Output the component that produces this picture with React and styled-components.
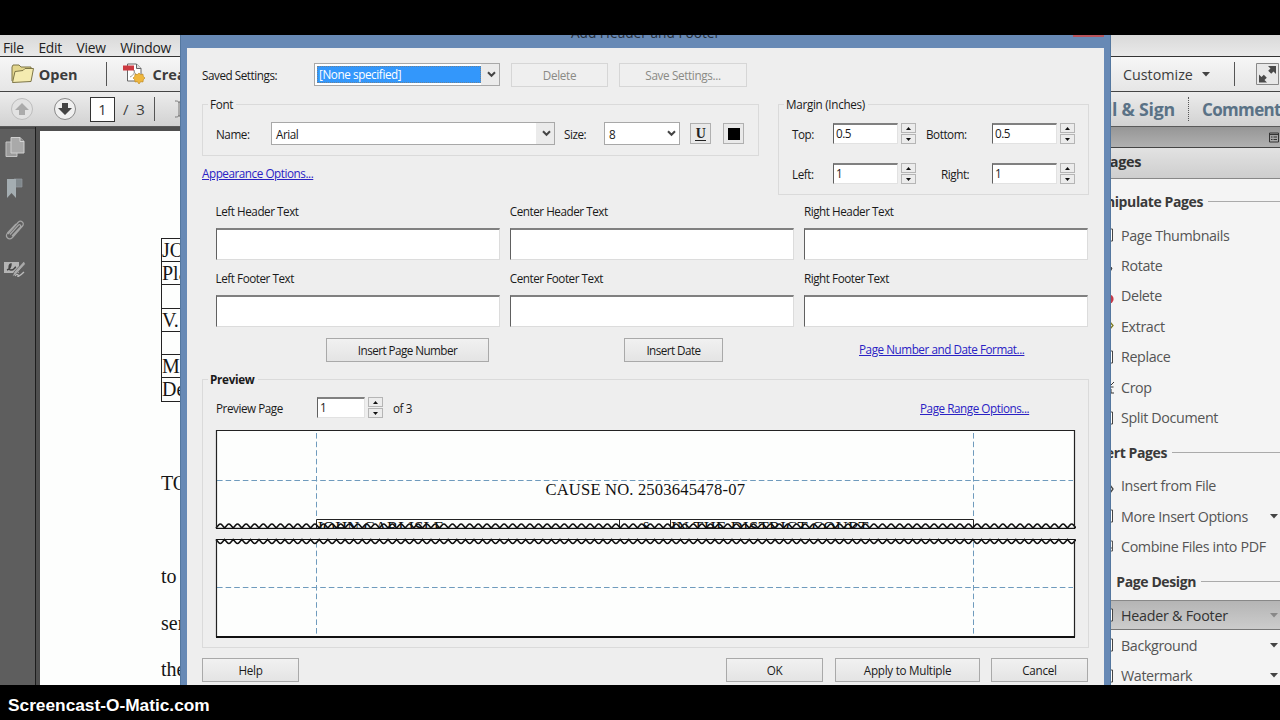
import React from "react";
import styled, { createGlobalStyle } from "styled-components";

const UI = `"Open Sans", "Noto Sans", sans-serif`;
const SERIF = `"Liberation Serif", serif`;

const Global = createGlobalStyle`
  * { box-sizing: border-box; }
  body { margin: 0; background: #000; overflow: hidden; }
`;

/* ---------- frame ---------- */
const Screen = styled.div`
  width: 1280px;
  height: 720px;
  background: #000;
  padding: 35px 0;
  display: grid;
  grid-template-rows: 650px 35px;
  font-family: ${UI};
`;
const Desktop = styled.div`
  position: relative;
  overflow: hidden;
  display: grid;
  grid-template-rows: 22px 35px 35px 1fr;
  background: #f2f2f2;
`;
const Watermark = styled.div`
  padding-left: 8px;
  font: bold 17.3px/41px "Liberation Sans", sans-serif;
  color: #fff;
`;

/* ---------- viewer bars ---------- */
const MenuBar = styled.div`
  display: flex;
  align-items: center;
  gap: 14.6px;
  padding: 3px 0 0 3px;
  border-bottom: 1px solid #333;
  background: linear-gradient(#d9d9d9, #e9e9e9);
  font-size: 13.8px;
  letter-spacing: -0.25px;
  color: #222;
`;
const ToolBar = styled.div`
  display: flex;
  justify-content: space-between;
  border-bottom: 1px solid #444;
  background: linear-gradient(#f6f6f6, #e6e6e6);
`;
const NavBar = styled(ToolBar)`
  background: linear-gradient(#ececec, #d2d2d2);
  border-bottom: 1px solid #5a5a5a;
`;
const BarSide = styled.div`
  display: flex;
  align-items: center;
  flex: none;
  padding-left: ${(p) => p.$pad || 0}px;
`;
const BarText = styled.span`
  flex: none;
  width: ${(p) => p.$w}px;
  white-space: nowrap;
  text-align: ${(p) => (p.$right ? "right" : "left")};
  font-size: ${(p) => p.$size || 15}px;
  font-weight: ${(p) => (p.$bold ? 700 : 400)};
  letter-spacing: ${(p) => p.$ls || 0}px;
  color: ${(p) => p.$color || "#3c3c3c"};
`;
const BarLine = styled.i`
  width: 1px;
  height: 24px;
  margin: 0 ${(p) => p.$r || 0}px 0 ${(p) => p.$l || 0}px;
  border-left: 1px ${(p) => (p.$dotted ? "dotted" : "solid")} #555;
`;
const PageBox = styled.div`
  width: 25px;
  height: 25px;
  margin: 0 8px 0 13px;
  border: 1px solid #333;
  background: #fff;
  font-size: 14.5px;
  line-height: 24px;
  text-align: center;
  color: #333;
`;
const Art = styled.svg`
  display: block;
  flex: none;
  margin: ${(p) => p.$m || 0};
`;

/* ---------- document ---------- */
const Work = styled.div`
  display: grid;
  grid-template-columns: 35px 1025px 220px;
`;
const Rail = styled.div`
  background: #5e5e5e;
  border-top: 2px solid #4a4a4a;
  display: flex;
  flex-direction: column;
  gap: 19px;
  padding: 7px 0 0 4px;
`;
const Canvas = styled.div`
  background: #4f4f4f;
  border-left: 1px solid #1d1d1d;
  padding: 4px 0 0 4px;
`;
const Paper = styled.div`
  height: 100%;
  background: #fdfefd;
  padding: 107px 0 0 121px;
  font: 20px/23.3px ${SERIF};
  color: #161616;
`;
const Caption = styled.div`
  width: 600px;
  border: 1px solid #222;
`;
const CaptionRow = styled.div`
  height: 23.2px;
  border-bottom: ${(p) => (p.$last ? 0 : 1)}px solid #222;
`;
const DocLine = styled.p`
  margin: ${(p) => p.$top}px 0 0;
  height: 23px;
`;

/* ---------- tools panel ---------- */
const Panel = styled.div`
  background: #f4f4f4;
  overflow: hidden;
`;
const PanelStrip = styled.div`
  height: 21px;
  display: flex;
  align-items: center;
  justify-content: flex-end;
  background: linear-gradient(#969696, #b0b0b0);
  border-bottom: 1px solid #444;
`;
const PanelTitle = styled.div`
  height: 31px;
  width: 100%;
  padding-right: 139px;
  text-align: right;
  background: linear-gradient(#e2e2e2, #cecece);
  border-bottom: 1px solid #888;
  font-weight: 700;
  font-size: 14.5px;
  line-height: 28px;
  letter-spacing: -0.4px;
  color: #333;
  margin-bottom: 3px;
`;
const SectionHead = styled.div`
  height: 38px;
  padding-top: 1px;
  display: flex;
  align-items: center;
  gap: 5px;
  white-space: nowrap;
  font-weight: 700;
  font-size: 14px;
  letter-spacing: -0.4px;
  color: #3a3a3a;
  span {
    width: ${(p) => p.$w}px;
    text-align: right;
    flex: none;
  }
  &::after {
    content: "";
    flex: 1;
    height: 1px;
    background: #aaa;
  }
`;
const Item = styled.div`
  height: 30.4px;
  padding: 0 2px 0 40px;
  display: flex;
  align-items: center;
  font-size: 14.3px;
  letter-spacing: -0.38px;
  color: ${(p) => (p.$on ? "#333" : "#555")};
  ${(p) =>
    p.$on &&
    "background: linear-gradient(#b4b4b4, #cdcdcd); box-shadow: inset 0 1px #888, inset 0 -1px #777; letter-spacing: -0.25px;"}
  span {
    flex: 1;
    padding-left: 7px;
    white-space: nowrap;
  }
`;

/* ---------- dialog ---------- */
const Dialog = styled.div`
  position: absolute;
  left: 180px;
  top: 0;
  width: 931px;
  height: 650px;
  display: grid;
  grid-template-rows: 13px 1fr;
  background: #6789b5;
  border: solid #54779f;
  border-width: 0 1px;
  padding: 0 6px;
`;
const TitleBar = styled.div`
  position: relative;
  overflow: hidden;
  text-align: center;
  font-size: 13.7px;
  line-height: 20px;
  color: #26303d;
  span {
    display: block;
    margin-top: -12px;
  }
`;
const CloseEdge = styled.i`
  position: absolute;
  right: 0;
  top: 0;
  width: 31px;
  height: 2px;
  background: #b8545c;
`;
const Body = styled.div`
  background: #eeeeee;
  padding: 15px 15px 0;
  font-size: 11.7px;
  letter-spacing: -0.45px;
  line-height: 16px;
  color: #1a1a1a;
  white-space: nowrap;
`;
const Row = styled.div`
  display: flex;
  align-items: ${(p) => p.$align || "center"};
  margin-top: ${(p) => p.$top || 0}px;
  padding-left: ${(p) => p.$pad || 0}px;
`;
const Label = styled.span`
  flex: none;
  width: ${(p) => p.$w}px;
  padding-top: ${(p) => p.$drop || 0}px;
`;
const Button = styled.button`
  flex: none;
  width: ${(p) => p.$w}px;
  height: 24px;
  margin-left: ${(p) => p.$l || 0}px;
  padding: 0;
  border: 1px solid ${(p) => (p.disabled ? "#d6d6d6" : "#a9a9a9")};
  background: ${(p) => (p.disabled ? "#efefef" : "linear-gradient(#f1f1f1, #e4e4e4)")};
  font: inherit;
  letter-spacing: ${(p) => p.$ls || -0.28}px;
  color: ${(p) => (p.disabled ? "#8a8a85" : "#1a1a1a")};
`;
const Combo = styled.div`
  flex: none;
  width: ${(p) => p.$w}px;
  height: 23px;
  display: flex;
  align-items: center;
  justify-content: space-between;
  padding: ${(p) => (p.$selected ? "0 2px" : "0 0 0 4px")};
  border: 1px solid #a8a8a8;
  background: ${(p) => (p.$flat ? "#fff" : "linear-gradient(90deg, #fff calc(100% - 18px), #ebebeb calc(100% - 18px))")};
`;
const Selected = styled.span`
  width: 164px;
  height: 17px;
  margin-bottom: 1px;
  padding-left: 2px;
  line-height: 16px;
  background: #3397fb;
  outline: 1px dotted #6b8296;
  outline-offset: -1px;
  color: #fff;
  letter-spacing: -0.4px;
`;
const Group = styled.fieldset`
  width: ${(p) => p.$w}px;
  height: ${(p) => p.$h}px;
  min-width: 0;
  margin: ${(p) => p.$top || 0}px 0 0 ${(p) => p.$l || 0}px;
  padding: 0 0 0 ${(p) => p.$pad}px;
  border: 1px solid #dadada;
`;
const Legend = styled.legend`
  margin-left: ${(p) => -p.$back}px;
  padding: 0 3px 0 2px;
  height: 16px;
  font-weight: ${(p) => (p.$bold ? 700 : 400)};
  letter-spacing: ${(p) => p.$ls || -0.3}px;
`;
const ToolButton = styled.div`
  width: 21px;
  height: 21px;
  margin-left: ${(p) => p.$l}px;
  display: grid;
  place-items: center;
  border: 1px solid #b0b0b0;
  background: #e9e9e9;
  font: bold 14px/14px ${SERIF};
  color: #222;
`;
const UnderlineMark = styled.span`
  border-bottom: 1px solid #222;
  line-height: 13px;
  padding: 0 1px;
`;
const Swatch = styled.i`
  width: 12px;
  height: 12px;
  background: #000;
`;
const Link = styled.a`
  color: #2a22c4;
  text-decoration: underline;
  margin-left: ${(p) => p.$l || 0}px;
  margin-bottom: ${(p) => p.$lift || 0}px;
  letter-spacing: ${(p) => p.$ls || -0.45}px;
`;
const SpinInput = styled.div`
  flex: none;
  width: ${(p) => p.$w}px;
  height: 21px;
  padding-left: 2px;
  border: solid #e2e2e2;
  border-width: 2px 1px 1px 1px;
  border-top-color: #808080;
  border-left-color: #606060;
  background: #fff;
  line-height: 16px;
`;
const SpinColumn = styled.div`
  width: 15px;
  margin: 0 ${(p) => p.$r || 0}px 0 3px;
  display: grid;
  grid-template-rows: 10px 10px;
  gap: 1px;
`;
const SpinButton = styled.div`
  border: 1px solid #b5b5b5;
  background: #ececec;
  display: grid;
  place-items: center;
`;
const FieldGrid = styled.div`
  display: grid;
  grid-template-columns: repeat(3, 284px);
  column-gap: 10.2px;
  margin: ${(p) => p.$top}px 0 0 13.6px;
  letter-spacing: -0.46px;
`;
const TextField = styled.div`
  height: 32px;
  margin-top: 9px;
  border: solid #dcdcdc;
  border-width: 2px 1px 1px 1px;
  border-top-color: #808080;
  border-left-color: #606060;
  background: #fff;
`;
const PreviewArt = styled.svg`
  display: block;
  margin: ${(p) => p.$top}px 0 0 -1px;
`;

/* ---------- small drawings ---------- */
const Chevron = ({ m }) => (
  <Art width="9" height="7" $m={m}>
    <path d="M1 1.200 4.500 4.800 8 1.200" fill="none" stroke="#444" strokeWidth="2" />
  </Art>
);
const Caret = ({ m, color = "#444" }) => (
  <Art width="8" height="5" $m={m}>
    <path d="M0 0h8L4 4.600z" fill={color} />
  </Art>
);
const Spin = ({ w, value, r }) => (
  <>
    <SpinInput $w={w}>{value}</SpinInput>
    <SpinColumn $r={r}>
      <SpinButton>
        <Art width="5" height="3"><path d="M0 3 2.500 0 5 3z" fill="#111" /></Art>
      </SpinButton>
      <SpinButton>
        <Art width="5" height="3"><path d="M0 0 2.500 3 5 0z" fill="#111" /></Art>
      </SpinButton>
    </SpinColumn>
  </>
);

const FolderIcon = () => (
  <Art width="24" height="20" viewBox="0 0 24 20">
    <path d="M1 17V3l1-2h6l2 2h10v3" fill="#e3d68d" stroke="#7d7546" />
    <path d="M1.500 18.500 4 7.500l8-1 2-2h8.500l-2.500 13z" fill="#f4ebb0" stroke="#7d7546" />
  </Art>
);
const CreateIcon = () => (
  <Art width="22" height="22" viewBox="0 0 22 22">
    <path d="M4.500 1h9l4.500 4.500V18H4.500z" fill="#fff" stroke="#666" />
    <path d="M13.500 1v4.500H18" fill="#ddd" stroke="#666" />
    <path d="M7 14c4-2 5-5 4-7 0 3 2 5 5 6" fill="none" stroke="#999" />
    <path d="M0 2.500h11v5H0z" fill="#cc3940" />
    <path d="m16 10 1.700 1.500 2.300-.4.300 2.300 1.700 1.600-1.700 1.700-.3 2.300-2.300-.3L16 21l-1.700-2.300-2.300.3-.3-2.300L10 15l1.700-1.600.3-2.300 2.300.4z" fill="#efb73e" stroke="#b98420" strokeWidth=".6" />
  </Art>
);
const ArrowDisc = ({ down, m }) => (
  <Art width="24" height="24" viewBox="0 0 24 24" $m={m}>
    <circle cx="12" cy="12" r="10.500" fill={down ? "#f0f0f0" : "#e2e2e2"} stroke={down ? "#888" : "#bdbdbd"} />
    <path
      d="M9 6h6v5h4l-7 7-7-7h4z"
      fill={down ? "#444" : "#ababab"}
      transform={down ? undefined : "rotate(180 12 12)"}
    />
  </Art>
);
const PagesIcon = () => (
  <Art width="21" height="23" viewBox="0 0 21 23">
    <path d="M2 6h11v14.500H2z" fill="#9b9b9b" stroke="#c4c4c4" />
    <path d="M7 1.500h9l4 4V17H7z" fill="#a9a9a9" stroke="#cfcfcf" />
    <path d="M16 1.500v4h4" fill="#888" stroke="#d5d5d5" />
  </Art>
);
const BookmarkIcon = () => (
  <Art width="21" height="22" viewBox="0 0 21 22">
    <path d="M10 1h8v8h-8z" fill="#80888c" stroke="#929a9e" strokeWidth=".7" />
    <path d="M3 1h9v19l-4.500-5L3 20z" fill="#a4adb1" />
  </Art>
);
const ClipIcon = () => (
  <Art width="21" height="22" viewBox="0 0 21 22">
    <path d="M4 15 14 3.500c3-3 7 .5 4.500 3.500L8.500 18.500c-3.500 3.500-8-.5-5-4.500L12 5M6 15.500 14.500 6c1.500-1 3 .5 2 2L8 17" fill="none" stroke="#a5a5a5" strokeWidth="1.200" />
  </Art>
);
const SignIcon = () => (
  <Art width="22" height="18" viewBox="0 0 22 18">
    <path d="M0 2h15v11H0z" fill="#b4b4b4" />
    <path d="M3 10c3-1 4-4 4-6-2 0-3 6 0 6s3-2 5-3" fill="none" stroke="#444" strokeWidth="1.500" />
    <path d="M20 1 10 12l-2 5 4-2.500L21.500 4z" fill="#a9a9a9" stroke="#555" strokeWidth=".7" />
    <path d="M11 16c2-3 4-1 3 0s2 0 6-4" fill="none" stroke="#bbb" strokeWidth="1.300" />
  </Art>
);
const ExpandIcon = () => (
  <Art width="24" height="24" viewBox="0 0 24 24">
    <path d="M.5 1.500h22v21h-22z" fill="#e8e8e8" stroke="#888" />
    <path d="M12 4h8v8l-2.500-2.500-2.300 2.300-3-3 2.300-2.300zM11 20.500H3v-8l2.500 2.500 2.300-2.300 3 3L8.500 18z" fill="#4a4a4a" />
  </Art>
);
const ListIcon = () => (
  <Art width="10" height="11" viewBox="0 0 10 11" $m="0 1px 0 0">
    <path d="M.5 1h9v9h-9zM0 2.500h10M2 5h1.500M4.500 5H8M2 7.500h1.500M4.500 7.500H8" fill="none" stroke="#333" />
  </Art>
);

const ITEM_ART = {
  page: <path d="M2 3h10.500v12H2z" fill="#fff" stroke="#444" />,
  rotate: <path d="M4 5c4-1 6 2 6 5l2 1-1.500 3-3-3" fill="none" stroke="#222" />,
  remove: <circle cx="9" cy="12" r="4.600" fill="#c43a48" />,
  extract: <path d="m10 5 3 3.500-3 3.500" fill="none" stroke="#7d7a20" strokeWidth="1.300" />,
  crop: <path d="M14 4 8 10M9 9h4.500M11 11v4h3" fill="none" stroke="#333" />,
  insert: <path d="m10 8 3 4-3 4" fill="none" stroke="#444" strokeWidth="1.300" />,
  combine: <path d="M4 3h8.500v10H9M10 10h3" fill="none" stroke="#555" />,
};
const SECTIONS = [
  {
    title: "Manipulate Pages",
    end: 143,
    items: [
      { text: "Page Thumbnails", art: "page" },
      { text: "Rotate", art: "rotate" },
      { text: "Delete", art: "remove" },
      { text: "Extract", art: "extract" },
      { text: "Replace", art: "page" },
      { text: "Crop", art: "crop" },
      { text: "Split Document", art: "page" },
    ],
  },
  {
    title: "Insert Pages",
    end: 107,
    items: [
      { text: "Insert from File", art: "insert" },
      { text: "More Insert Options", art: "page", more: true },
      { text: "Combine Files into PDF", art: "combine" },
    ],
  },
  {
    title: "Edit\u00a0 Page Design",
    end: 136,
    items: [
      { text: "Header & Footer", art: "page", more: true, on: true },
      { text: "Background", art: "page", more: true },
      { text: "Watermark", art: "page", more: true },
    ],
  },
];

const wave = (y, dir) => {
  let d = `M1 ${y}`;
  for (let i = 0; i < 100; i += 1) {
    d += `l2.600 ${-3 * dir}q1.700 ${-2 * dir} 3.400 0l2.600 ${3 * dir}`;
  }
  return d;
};
const Guide = (props) => <path fill="none" stroke="#6f9bbd" strokeDasharray="5.600 3" {...props} />;

const HeaderPreview = () => (
  <PreviewArt width="861" height="100" $top={11}>
    <path d="M1 1H860V99H1z" fill="#fdfefd" />
    <Guide d="M2 51.500H858" />
    <Guide d="M101.500 4V90M758.500 4V90" />
    <g fontFamily="Liberation Serif, serif" fontSize="16.600" fill="#111">
      <text x="330.500" y="66" textLength="199">CAUSE NO. 2503645478-07</text>
      <text x="101.500" y="104" textLength="127">JOHN CARLISLE</text>
      <text x="427" y="105">§</text>
      <text x="456" y="104" textLength="197">IN THE DISTRICT COURT</text>
    </g>
    <path d="M101.500 99V90.500H758.500V99M404.500 90V99M455.500 90V99" fill="none" stroke="#222" />
    <path d={wave(99, 1)} fill="none" stroke="#111" strokeWidth="1.600" />
    <path d="M1.500 100V1.500H859.500V100" fill="none" stroke="#222" strokeWidth="1.200" />
    <path d="M1 99.400H860" stroke="#111" strokeWidth="1.200" />
  </PreviewArt>
);
const FooterPreview = () => (
  <PreviewArt width="861" height="100" $top={9}>
    <path d="M1 1H860V99H1z" fill="#fdfefd" />
    <Guide d="M2 49.500H858" />
    <Guide d="M101.500 4V98M758.500 4V98" />
    <path d={wave(1.5, -1)} fill="none" stroke="#111" strokeWidth="1.600" />
    <path d="M1.500 1V98.500H859.500V1" fill="none" stroke="#222" strokeWidth="1.200" />
    <path d="M1 1.500H860" stroke="#111" strokeWidth="1.200" />
    <path d="M1 99H860" stroke="#111" strokeWidth="2" />
  </PreviewArt>
);

const Field = ({ label }) => (
  <div>
    <Label>{label}</Label>
    <TextField />
  </div>
);

const HeaderFooterDialog = () => (
  <Dialog>
    <TitleBar>
      <span>Add Header and Footer</span>
      <CloseEdge />
    </TitleBar>
    <Body>
      <Row $align="flex-start">
        <Label $w={112} $drop={4}>Saved Settings:</Label>
        <Combo $w={186} $selected>
          <Selected>[None specified]</Selected>
          <Chevron m="0 1px 0 0" />
        </Combo>
        <Button $w={97} $l={11} disabled>Delete</Button>
        <Button $w={128} $l={11} $ls={-0.35} disabled>Save Settings...</Button>
      </Row>
      <Row $top={9} $align="flex-start">
        <div>
          <Group $w={557} $h={60} $pad={13}>
            <Legend $back={8}>Font</Legend>
            <Row $top={10}>
              <Label $w={55}>Name:</Label>
              <Combo $w={284}>
                Arial
                <Chevron m="0 3px 0 0" />
              </Combo>
              <Label $w={49}>
                <Row $pad={9}>Size:</Row>
              </Label>
              <Combo $w={76} $flat>
                8
                <Chevron m="0 3px 0 0" />
              </Combo>
              <ToolButton $l={10}>
                <UnderlineMark>U</UnderlineMark>
              </ToolButton>
              <ToolButton $l={12}>
                <Swatch />
              </ToolButton>
            </Row>
          </Group>
          <Row $top={9}>
            <Link>Appearance Options...</Link>
          </Row>
        </div>
        <Group $w={311} $h={99} $l={19} $pad={13}>
          <Legend $back={8} $ls={-0.3}>Margin (Inches)</Legend>
          <Row $top={11}>
            <Label $w={41}>Top:</Label>
            <Spin w={65} value="0.5" r={10} />
            <Label $w={66}>Bottom:</Label>
            <Spin w={65} value="0.5" />
          </Row>
          <Row $top={19}>
            <Label $w={41}>Left:</Label>
            <Spin w={65} value="1" r={25} />
            <Label $w={51}>Right:</Label>
            <Spin w={65} value="1" />
          </Row>
        </Group>
      </Row>
      <FieldGrid $top={8}>
        <Field label="Left Header Text" />
        <Field label="Center Header Text" />
        <Field label="Right Header Text" />
      </FieldGrid>
      <FieldGrid $top={10}>
        <Field label="Left Footer Text" />
        <Field label="Center Footer Text" />
        <Field label="Right Footer Text" />
      </FieldGrid>
      <Row $top={11} $pad={124}>
        <Button $w={163} $ls={-0.55}>Insert Page Number</Button>
        <Button $w={99} $l={135} $ls={-0.55}>Insert Date</Button>
        <Link $l={136} $lift={2}>Page Number and Date Format...</Link>
      </Row>
      <Group $w={887} $h={277} $top={9} $pad={13}>
        <Legend $back={8} $bold>Preview</Legend>
        <Row $top={10}>
          <Label $w={101}>Preview Page</Label>
          <Spin w={48} value="1" r={10} />
          <Label $w={527}>of 3</Label>
          <Link>Page Range Options...</Link>
        </Row>
        <HeaderPreview />
        <FooterPreview />
      </Group>
      <Row $top={10}>
        <Button $w={97}>Help</Button>
        <Button $w={97} $l={427}>OK</Button>
        <Button $w={145} $l={12}>Apply to Multiple</Button>
        <Button $w={97} $l={11}>Cancel</Button>
      </Row>
    </Body>
  </Dialog>
);

export default function App() {
  return (
    <Screen>
      <Global />
      <Desktop>
        <MenuBar>
          <span>File</span>
          <span>Edit</span>
          <span>View</span>
          <span>Window</span>
        </MenuBar>
        <ToolBar>
          <BarSide $pad={11}>
            <FolderIcon />
            <BarText $w={70} $bold $size={14.5}>&nbsp;Open</BarText>
            <BarLine $l={1} $r={16} />
            <CreateIcon />
            <BarText $w={60} $bold $size={14.5}>&nbsp;&nbsp;Create</BarText>
          </BarSide>
          <BarSide>
            <BarText $w={79} $size={14.3}>Customize</BarText>
            <Caret />
            <BarLine $l={24} $r={21} />
            <ExpandIcon />
          </BarSide>
        </ToolBar>
        <NavBar>
          <BarSide $pad={10}>
            <ArrowDisc />
            <ArrowDisc down m="0 0 0 19px" />
            <PageBox>1</PageBox>
            <BarText $w={31} $size={15}>/&nbsp; 3</BarText>
            <BarLine $r={19} />
            <Art width="10" height="18">
              <path d="M1 1c2 0 4 0 4 2v12c0 2-2 2-4 2M9 1C7 1 5 1 5 3M9 17c-2 0-4 0-4-2" fill="none" stroke="#777" />
            </Art>
          </BarSide>
          <BarSide>
            <BarText $w={91} $bold $right $size={17.8} $color="#5a7286" $ls={-0.25}>Fill &amp; Sign</BarText>
            <BarLine $l={13} $r={13} $dotted />
            <BarText $w={78} $bold $size={17} $color="#5a7286" $ls={-0.65}>Comment</BarText>
          </BarSide>
        </NavBar>
        <Work>
          <Rail>
            <PagesIcon />
            <BookmarkIcon />
            <ClipIcon />
            <SignIcon />
          </Rail>
          <Canvas>
            <Paper>
              <Caption>
                <CaptionRow>JOHN CARLISLE</CaptionRow>
                <CaptionRow>Plaintiff</CaptionRow>
                <CaptionRow />
                <CaptionRow>V.</CaptionRow>
                <CaptionRow />
                <CaptionRow>M</CaptionRow>
                <CaptionRow $last>Defendant</CaptionRow>
              </Caption>
              <DocLine $top={70}>TO</DocLine>
              <DocLine $top={70}>to</DocLine>
              <DocLine $top={24}>ser</DocLine>
              <DocLine $top={23}>the</DocLine>
            </Paper>
          </Canvas>
          <Panel>
            <PanelStrip>
              <ListIcon />
            </PanelStrip>
            <PanelTitle>Pages</PanelTitle>
            {SECTIONS.map((s) => (
              <React.Fragment key={s.title}>
                <SectionHead $w={s.end}>
                  <span>{s.title}</span>
                </SectionHead>
                {s.items.map((it) => (
                  <Item key={it.text} $on={it.on}>
                    <Art width="14" height="18">{ITEM_ART[it.art]}</Art>
                    <span>{it.text}</span>
                    {it.more && <Caret color={it.on ? "#888" : "#444"} />}
                  </Item>
                ))}
              </React.Fragment>
            ))}
          </Panel>
        </Work>
        <HeaderFooterDialog />
      </Desktop>
      <Watermark>Screencast-O-Matic.com</Watermark>
    </Screen>
  );
}
